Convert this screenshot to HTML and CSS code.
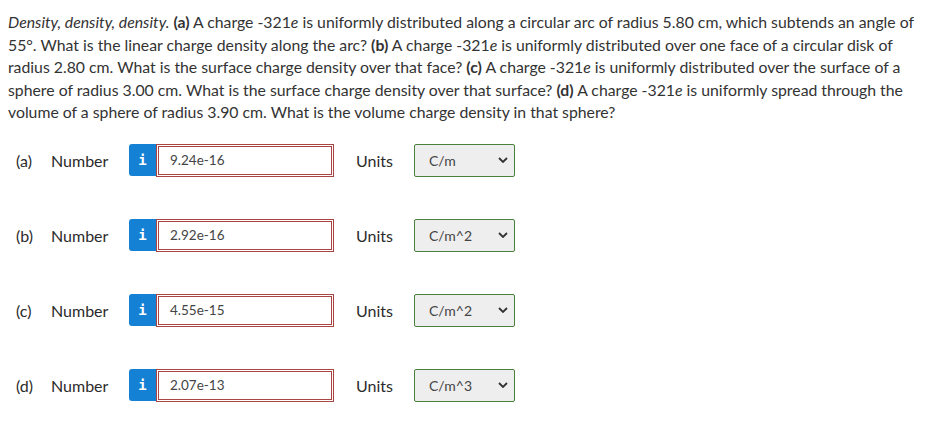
FILE: index.html
```html
<!DOCTYPE html>
<html>
<head>
<meta charset="utf-8">
<link rel="stylesheet" href="styles.css">
</head>
<body>
<div class="question">
  <p class="prompt"><i>Density, density, density.</i> <b>(a)</b> A charge -321<i>e</i> is uniformly distributed along a circular arc of radius 5.80 cm, which subtends an angle of 55°. What is the linear charge density along the arc? <b>(b)</b> A charge -321<i>e</i> is uniformly distributed over one face of a circular disk of radius 2.80 cm. What is the surface charge density over that face? <b>(c)</b> A charge -321<i>e</i> is uniformly distributed over the surface of a sphere of radius 3.00 cm. What is the surface charge density over that surface? <b>(d)</b> A charge -321<i>e</i> is uniformly spread through the volume of a sphere of radius 3.90 cm. What is the volume charge density in that sphere?</p>

  <div class="row">
    <span class="part">(a)</span>
    <span class="kind">Number</span>
    <span class="info">i</span>
    <span class="answer"><span class="field">9.24e-16</span></span>
    <span class="units-label">Units</span>
    <span class="select"><span>C/m</span><svg class="chev" viewBox="0 0 10 6" width="10" height="6"><path d="M1 1l4 4 4-4" fill="none" stroke="#333" stroke-width="1.8"/></svg></span>
  </div>

  <div class="row">
    <span class="part">(b)</span>
    <span class="kind">Number</span>
    <span class="info">i</span>
    <span class="answer"><span class="field">2.92e-16</span></span>
    <span class="units-label">Units</span>
    <span class="select"><span>C/m^2</span><svg class="chev" viewBox="0 0 10 6" width="10" height="6"><path d="M1 1l4 4 4-4" fill="none" stroke="#333" stroke-width="1.8"/></svg></span>
  </div>

  <div class="row">
    <span class="part">(c)</span>
    <span class="kind">Number</span>
    <span class="info">i</span>
    <span class="answer"><span class="field">4.55e-15</span></span>
    <span class="units-label">Units</span>
    <span class="select"><span>C/m^2</span><svg class="chev" viewBox="0 0 10 6" width="10" height="6"><path d="M1 1l4 4 4-4" fill="none" stroke="#333" stroke-width="1.8"/></svg></span>
  </div>

  <div class="row">
    <span class="part">(d)</span>
    <span class="kind">Number</span>
    <span class="info">i</span>
    <span class="answer"><span class="field">2.07e-13</span></span>
    <span class="units-label">Units</span>
    <span class="select"><span>C/m^3</span><svg class="chev" viewBox="0 0 10 6" width="10" height="6"><path d="M1 1l4 4 4-4" fill="none" stroke="#333" stroke-width="1.8"/></svg></span>
  </div>
</div>
</body>
</html>
```

FILE: styles.css
```css
html, body {
  margin: 0;
  padding: 0;
  background: #fff;
}
body {
  padding: 11px 8px 0 8px;
  font-family: Lato, "Open Sans", sans-serif;
  color: #333;
}
.question {
  width: 912px;
}
.prompt {
  margin: 0 0 20px 0;
  font-size: 15.8px;
  line-height: 22.5px;
}
.prompt b {
  font-weight: 700;
}
.row {
  display: flex;
  align-items: center;
  height: 33px;
  margin-bottom: 42px;
  padding-left: 8px;
  font-size: 16px;
  color: #2b2b2b;
}
.part {
  width: 35px;
}
.kind {
  width: 78px;
}
.info {
  width: 27px;
  height: 32px;
  background: #1581d4;
  color: #fff;
  border-radius: 3px 0 0 3px;
  display: flex;
  align-items: center;
  justify-content: center;
  font-family: "DejaVu Sans Mono", monospace;
  font-weight: 700;
  font-size: 14px;
}
.answer {
  box-sizing: border-box;
  width: 178px;
  height: 33px;
  border: 1px solid #a94442;
  padding: 1px;
  display: flex;
}
.field {
  flex: 1;
  border: 1px solid #a94442;
  display: flex;
  align-items: center;
  padding-left: 11px;
  font-size: 13.5px;
  color: #444;
}
.units-label {
  margin-left: 22px;
  width: 58px;
}
.select {
  box-sizing: border-box;
  width: 101px;
  height: 33px;
  border: 1px solid #4a7f3c;
  border-radius: 2px;
  background: #eeeeee;
  display: flex;
  align-items: center;
  justify-content: space-between;
  padding: 0 6px 0 14px;
  font-size: 14px;
  color: #444;
}
.chev {
  display: block;
}
```
